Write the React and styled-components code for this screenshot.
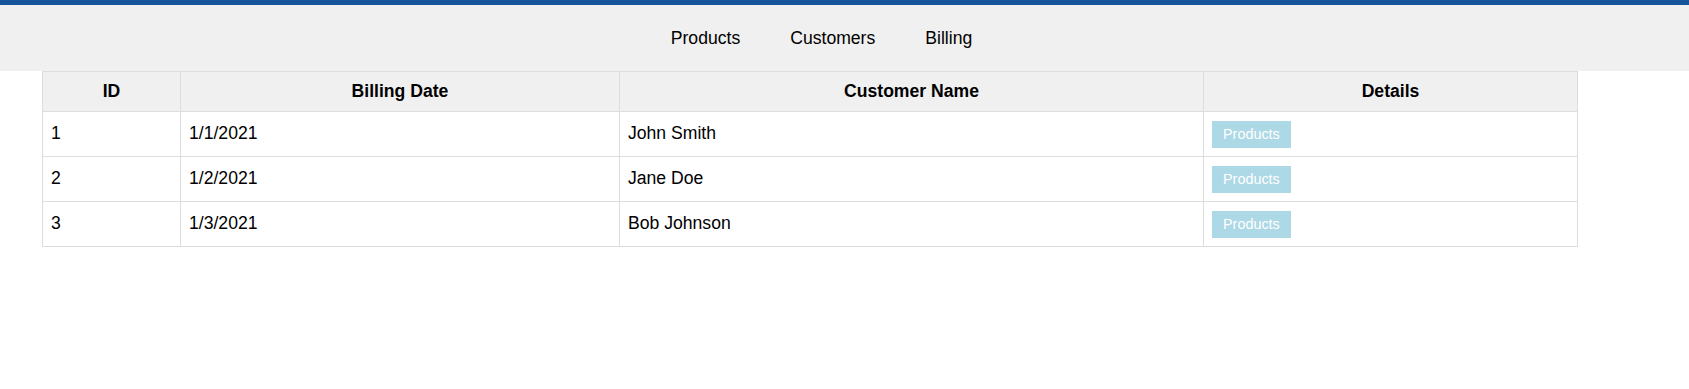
import styled, { createGlobalStyle } from 'styled-components';

const GlobalStyle = createGlobalStyle`
    body {
        margin: 0;
        font-family: "Liberation Sans", Arial, sans-serif;
        font-size: 17.6px;
        color: #000;
        background: #fff;
    }
`;

const Nav = styled.nav`
    display: flex;
    justify-content: center;
    align-items: center;
    height: 66px;
    padding-left: 4px;
    border-top: 5px solid #16549b;
    background-color: #f0f0f0;
`;

const NavLink = styled.a`
    margin-right: 50px;
    color: #000;
    text-decoration: none;
    cursor: pointer;
`;

const Table = styled.table`
    width: 1535px;
    margin-left: 42px;
    border-collapse: collapse;
    table-layout: fixed;
`;

const Th = styled.th`
    width: ${(props) => props.$width}px;
    padding: 10px 8px;
    line-height: 19px;
    background-color: #f0f0f0;
    border: 1px solid #ddd;
    font-weight: 700;
    text-align: center;
`;

const Td = styled.td`
    padding: 8px;
    line-height: 27px;
    border: 1px solid #ddd;
    text-align: left;
    color: #000;
`;

const DetailsButton = styled.button`
    display: inline-block;
    vertical-align: middle;
    height: 27px;
    padding: 0 11px;
    border: none;
    background-color: #add8e6;
    color: #fff;
    font-family: inherit;
    font-size: 14.4px;
    line-height: 27px;
    cursor: pointer;
`;

const billings = [
    { id: 1, date: '1/1/2021', customer: 'John Smith' },
    { id: 2, date: '1/2/2021', customer: 'Jane Doe' },
    { id: 3, date: '1/3/2021', customer: 'Bob Johnson' },
];

function App() {
    return (
        <>
            <GlobalStyle />
            <Nav>
                <NavLink>Products</NavLink>
                <NavLink>Customers</NavLink>
                <NavLink>Billing</NavLink>
            </Nav>
            <Table>
                <thead>
                    <tr>
                        <Th $width={121}>ID</Th>
                        <Th $width={422}>Billing Date</Th>
                        <Th $width={567}>Customer Name</Th>
                        <Th $width={357}>Details</Th>
                    </tr>
                </thead>
                <tbody>
                    {billings.map((b) => (
                        <tr key={b.id}>
                            <Td>{b.id}</Td>
                            <Td>{b.date}</Td>
                            <Td>{b.customer}</Td>
                            <Td>
                                <DetailsButton>Products</DetailsButton>
                            </Td>
                        </tr>
                    ))}
                </tbody>
            </Table>
        </>
    );
}

export default App;
